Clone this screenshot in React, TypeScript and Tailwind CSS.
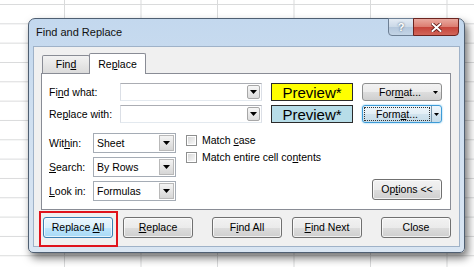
import React from 'react';

// access-key underline
const U: React.FC<{ children: React.ReactNode }> = ({ children }) => (
  <span className="underline underline-offset-[1px] decoration-[1px]">{children}</span>
);

const Arrow: React.FC = () => (
  <svg width="7" height="4" viewBox="0 0 7 4" className="shrink-0">
    <polygon points="0,0 7,0 3.5,4" fill="#000" />
  </svg>
);

interface BtnProps {
  children: React.ReactNode;
  primary?: boolean;
  className?: string;
}

const Btn: React.FC<BtnProps> = ({ children, primary, className = '' }) => (
  <div
    className={`flex items-center justify-center h-[21px] w-[70px] rounded-[3px] border ${
      primary
        ? 'border-[#3c7fb1] bg-[linear-gradient(to_bottom,#eaf6fd_0%,#d9f0fc_50%,#bee6fd_51%,#a7d9f5_100%)]'
        : 'border-[#707070] bg-[linear-gradient(to_bottom,#f2f2f2_0%,#ebebeb_50%,#dddddd_51%,#cfcfcf_100%)]'
    } shadow-[inset_0_0_0_1px_rgba(255,255,255,0.7)] ${className}`}
  >
    <span>{children}</span>
  </div>
);

// editable combo (Find what / Replace with)
const Combo: React.FC = () => (
  <div className="w-[142px] h-[18px] flex items-center justify-end bg-white border border-[#abadb3] border-b-[#e3e9ef] border-x-[#dbdfe6] pr-px">
    <div className="w-[13px] h-[14px] flex items-center justify-center border border-[#a7a7a7] rounded-[2px] bg-[linear-gradient(to_bottom,#f7f7f7,#dcdcdc)]">
      <Arrow />
    </div>
  </div>
);

// dropdown list (Within / Search / Look in)
const Select: React.FC<{ value: string }> = ({ value }) => (
  <div className="w-[83px] h-[20px] flex items-stretch bg-white border border-[#a5acb5]">
    <span className="flex-1 flex items-center pl-[3px]">{value}</span>
    <div className="w-[15px] my-px mr-px flex items-center justify-center border border-[#b9b9b9] bg-[linear-gradient(to_bottom,#f4f4f4,#d6d6d6)]">
      <Arrow />
    </div>
  </div>
);

const Format: React.FC<{ focused?: boolean }> = ({ focused }) =>
  focused ? (
    <div className="w-[80px] h-[18px] flex items-stretch rounded-[3px] border border-[#3d9bd7] bg-[linear-gradient(to_bottom,#eef6fb_0%,#e2eef6_50%,#d2e4ef_51%,#c6dce9_100%)] shadow-[0_0_2px_#6ec0ee]">
      <div className="flex-1 m-px flex items-center justify-center border border-dotted border-[#333]">
        <span>
          Form<U>a</U>t...
        </span>
      </div>
      <div className="w-[10px] flex items-center justify-center border-l border-[#7a98ad]">
        <svg width="5" height="3" viewBox="0 0 5 3"><polygon points="0,0 5,0 2.5,3" fill="#000" /></svg>
      </div>
    </div>
  ) : (
    <div className="w-[80px] h-[18px] flex items-center rounded-[3px] border border-[#8e8f8f] bg-[linear-gradient(to_bottom,#f2f2f2_0%,#ebebeb_50%,#dddddd_51%,#cfcfcf_100%)]">
      <span className="flex-1 text-center pl-[8px]">
        For<U>m</U>at...
      </span>
      <span className="w-[12px] flex justify-center">
        <svg width="5" height="3" viewBox="0 0 5 3"><polygon points="0,0 5,0 2.5,3" fill="#000" /></svg>
      </span>
    </div>
  );

const Check: React.FC<{ children: React.ReactNode }> = ({ children }) => (
  <div className="flex items-center h-[14px] gap-[5px]">
    <div className="w-[11px] h-[11px] border border-[#8e8f8f] bg-white p-px">
      <div className="w-full h-full bg-[linear-gradient(135deg,#d8d8d8,#f8f8f8)]" />
    </div>
    <span>{children}</span>
  </div>
);

export default function App() {
  return (
    <div className="relative w-[474px] h-[267px] overflow-hidden bg-white bg-[image:linear-gradient(to_right,#d9dadb_1px,transparent_1px),linear-gradient(to_bottom,#d9dadb_1px,transparent_1px)] bg-[size:76.5px_19.33px] bg-[position:64px_4px] pt-[18px] pl-[28px] font-['Liberation_Sans',Arial,sans-serif] text-[10.5px] text-black leading-none">
      {/* Dialog window */}
      <div className="w-[437px] h-[235px] flex flex-col rounded-t-[7px] rounded-b-[5px] border border-[#4f5f72] bg-[linear-gradient(to_bottom,#c3d8ee_0%,#cfdff0_40%,#d9e5f2_100%)] shadow-[3px_5px_9px_rgba(0,0,0,0.55)]">
        {/* Title bar */}
        <div className="h-[27px] flex items-start">
          <span className="self-center pl-[7px] text-[11px] text-[#111]">Find and Replace</span>
          <div className="ml-auto mr-[5px] -mt-px flex">
            <div className="w-[26px] h-[18px] flex items-center justify-center rounded-bl-[4px] border border-[#6d7f94] bg-[linear-gradient(to_bottom,#e3ebf4_0%,#cad8e7_50%,#b4c7dc_51%,#c3d4e6_100%)] text-[11px] font-bold text-white [text-shadow:0_0_2px_#34495f]">
              ?
            </div>
            <div className="w-[46px] h-[18px] -ml-px flex items-center justify-center rounded-br-[4px] border border-[#6b2420] bg-[linear-gradient(to_bottom,#e9a99f_0%,#dc7c70_50%,#c5443a_51%,#d2665a_100%)]">
              <svg width="11" height="9" viewBox="0 0 11 9">
                <path d="M1.5 1 L9.5 8 M9.5 1 L1.5 8" stroke="#5a1410" strokeWidth="3.6" strokeLinecap="square" />
                <path d="M1.5 1 L9.5 8 M9.5 1 L1.5 8" stroke="#fff" strokeWidth="2" strokeLinecap="square" />
              </svg>
            </div>
          </div>
        </div>

        {/* Client area */}
        <div className="mx-[4px] h-[201px] border border-[#9fb2c8] bg-[#f0f0f0] flex flex-col">
          {/* Tabs */}
          <div className="flex items-end ml-[8px] mt-[6px] h-[20px]">
            <div className="w-[48px] h-[18px] flex items-center justify-center border border-b-0 border-[#898c95] rounded-t-[2px] bg-[linear-gradient(to_bottom,#f2f2f2,#dbdbdb)]">
              <span>
                Fin<U>d</U>
              </span>
            </div>
            <div className="relative z-10 -ml-px -mb-px w-[57px] h-[21px] flex items-center justify-center border border-b-0 border-[#898c95] rounded-t-[2px] bg-white">
              <span>
                Re<U>p</U>lace
              </span>
            </div>
          </div>

          {/* Tab panel */}
          <div className="ml-[7px] w-[410px] h-[137px] border border-[#898c95] bg-white pl-[7px] pr-[8px] pt-[9px] flex flex-col">
            <div className="flex items-center h-[18px]">
              <span className="w-[71px]">
                Fi<U>n</U>d what:
              </span>
              <Combo />
              <div className="ml-[9px] w-[82px] h-[18px] flex items-center justify-center border border-[#2b2b2b] bg-[#ffff00] text-[15px]">
                Preview*
              </div>
              <div className="ml-[9px]">
                <Format />
              </div>
            </div>
            <div className="flex items-center h-[18px] mt-[4px]">
              <span className="w-[71px]">
                Re<U>p</U>lace with:
              </span>
              <Combo />
              <div className="ml-[9px] w-[82px] h-[18px] flex items-center justify-center border border-[#2b2b2b] bg-[#b7dde8] text-[15px]">
                Preview*
              </div>
              <div className="ml-[9px]">
                <Format focused />
              </div>
            </div>

            <div className="flex mt-[10px] h-[68px]">
              <div className="flex flex-col gap-[4px]">
                <div className="flex items-center">
                  <span className="w-[44px]">
                    Wit<U>h</U>in:
                  </span>
                  <Select value="Sheet" />
                </div>
                <div className="flex items-center">
                  <span className="w-[44px]">
                    <U>S</U>earch:
                  </span>
                  <Select value="By Rows" />
                </div>
                <div className="flex items-center">
                  <span className="w-[44px]">
                    <U>L</U>ook in:
                  </span>
                  <Select value="Formulas" />
                </div>
              </div>
              <div className="ml-[10px] flex-1 flex flex-col">
                <div className="flex flex-col gap-[3px]">
                  <Check>
                    Match <U>c</U>ase
                  </Check>
                  <Check>
                    Match entire cell co<U>n</U>tents
                  </Check>
                </div>
                <Btn className="mt-auto mb-px self-end h-[20px]">
                  Op<U>t</U>ions &lt;&lt;
                </Btn>
              </div>
            </div>
          </div>

          {/* Bottom buttons */}
          <div className="flex ml-[9px] mt-[7px]">
            <Btn primary>
              Replace <U>A</U>ll
            </Btn>
            <Btn className="ml-[10px]">
              <U>R</U>eplace
            </Btn>
            <Btn className="ml-[19px]">
              F<U>i</U>nd All
            </Btn>
            <Btn className="ml-[10px]">
              <U>F</U>ind Next
            </Btn>
            <Btn className="ml-[19px]">Close</Btn>
          </div>
        </div>
      </div>

      {/* Red highlight annotation */}
      <div className="absolute left-[39px] top-[211px] w-[79px] h-[36px] border-2 border-[#e0131c]" />
    </div>
  );
}
